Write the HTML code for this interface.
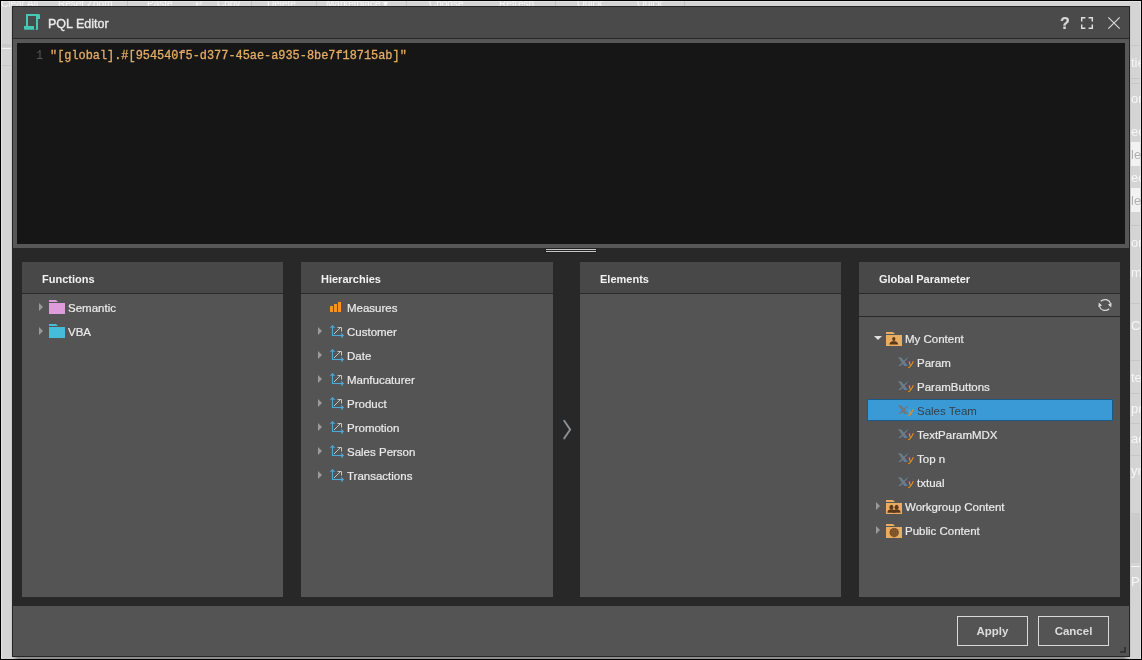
<!DOCTYPE html>
<html>
<head>
<meta charset="utf-8">
<style>
*{margin:0;padding:0;box-sizing:border-box;}
html,body{width:1142px;height:660px;overflow:hidden;}
body{position:relative;background:#000;font-family:"Liberation Sans",sans-serif;-webkit-font-smoothing:antialiased;}
svg{position:absolute;overflow:visible;}
#page{position:absolute;left:1px;top:1px;width:1140px;height:658px;background:#d4d4d4;overflow:hidden;}
#modal{position:absolute;left:12px;top:6px;width:1118px;height:651px;background:#282828;border:1px solid #262626;}
#hdr{position:absolute;left:13px;top:7px;width:1116px;height:31px;background:#4a4a4a;}
#edborder{position:absolute;left:13px;top:39px;width:1116px;height:209px;background:#575757;}
#editor{position:absolute;left:17px;top:43px;width:1108px;height:201px;background:#161616;}
.panel{position:absolute;top:262px;height:335px;background:#545454;}
.phead{position:absolute;left:0;top:0;right:0;height:32px;background:#484848;border-bottom:1px solid #2a2a2a;}
.ptitle{position:absolute;font-weight:bold;font-size:11px;line-height:14px;color:#f2f2f2;white-space:nowrap;}
.t{position:absolute;font-size:11.5px;line-height:16px;color:#ebebeb;white-space:nowrap;-webkit-text-stroke:0.2px currentColor;}
#footer{position:absolute;left:13px;top:606px;width:1116px;height:50px;background:#545454;}
.btn{position:absolute;top:616px;width:71px;height:30px;border:1px solid #dadada;color:#dcdcdc;font-weight:bold;font-size:11.5px;line-height:28px;text-align:center;}
.t,.ptitle,.btn,.mono{will-change:transform;}
.bgt{position:absolute;font-size:13px;line-height:16px;color:#f6f6f6;white-space:nowrap;will-change:transform;}
.mono{position:absolute;font-family:"Liberation Mono",monospace;font-size:11.9px;line-height:16px;white-space:pre;-webkit-text-stroke:0.3px currentColor;}
</style>
</head>
<body>
<div id="page"></div>
<div style="position:absolute;left:1px;top:1px;width:1px;height:658px;background:#e2e2e2;"></div>
<div style="position:absolute;left:11px;top:1px;width:1px;height:656px;background:#c8c8c8;"></div>
<div style="position:absolute;left:1130px;top:6px;width:1px;height:651px;background:#c8c8c8;"></div>
<div style="position:absolute;left:1140px;top:1px;width:1px;height:658px;background:#e2e2e2;"></div>
<div style="position:absolute;left:1px;top:1px;width:1140px;height:1px;background:#e2e2e2;"></div>
<div style="position:absolute;left:11px;top:32px;width:1px;height:8px;background:#b8c4d0;"></div>
<div style="position:absolute;left:2px;top:44px;width:9px;height:3px;background:#cacaca;"></div>
<div style="position:absolute;left:2px;top:48px;width:9px;height:1px;background:#f4f4f4;"></div>
<div style="position:absolute;left:2px;top:65px;width:9px;height:1px;background:#c8c8c8;"></div>
<div style="position:absolute;left:1131px;top:45px;width:9px;height:1px;background:#c6c6c6;"></div>
<div style="position:absolute;left:1131px;top:78px;width:9px;height:1px;background:#c6c6c6;"></div>
<div style="position:absolute;left:1131px;top:83px;width:9px;height:1px;background:#c6c6c6;"></div>
<div style="position:absolute;left:1131px;top:142px;width:9px;height:24px;background:#f2f2f2;"></div>
<div style="position:absolute;left:1131px;top:188px;width:9px;height:24px;background:#f2f2f2;"></div>
<div style="position:absolute;left:1131px;top:225px;width:9px;height:1px;background:#c6c6c6;"></div>
<div style="position:absolute;left:1131px;top:303px;width:9px;height:1px;background:#c6c6c6;"></div>
<div style="position:absolute;left:1131px;top:360px;width:9px;height:1px;background:#c6c6c6;"></div>
<div style="position:absolute;left:1131px;top:393px;width:9px;height:1px;background:#c6c6c6;"></div>
<div style="position:absolute;left:1131px;top:423px;width:9px;height:1px;background:#c6c6c6;"></div>
<div style="position:absolute;left:1131px;top:455px;width:9px;height:1px;background:#c6c6c6;"></div>
<div style="position:absolute;left:1131px;top:513px;width:9px;height:50px;background:#cbcbcb;"></div>
<div style="position:absolute;left:1131px;top:566px;width:9px;height:1px;background:#f4f4f4;"></div>
<div class="bgt" style="left:1131px;top:55px;">ties</div>
<div class="bgt" style="left:1131px;top:91px;">on</div>
<div class="bgt" style="left:1131px;top:124px;">ec</div>
<div class="bgt" style="left:1131px;top:147px;color:#b0b0b0;">le</div>
<div class="bgt" style="left:1131px;top:170px;">ec</div>
<div class="bgt" style="left:1131px;top:193px;color:#b0b0b0;">le</div>
<div class="bgt" style="left:1131px;top:235px;">orm</div>
<div class="bgt" style="left:1131px;top:265px;">ma</div>
<div class="bgt" style="left:1131px;top:318px;">C</div>
<div class="bgt" style="left:1131px;top:370px;">ted</div>
<div class="bgt" style="left:1131px;top:401px;">pre</div>
<div class="bgt" style="left:1131px;top:431px;">ach</div>
<div class="bgt" style="left:1131px;top:463px;">yn</div>
<div class="bgt" style="left:1131px;top:574px;">Pr</div>
<div style="position:absolute;left:127px;top:1px;width:1px;height:5px;background:#c2c2c2;"></div>
<div style="position:absolute;left:251px;top:1px;width:1px;height:5px;background:#c2c2c2;"></div>
<div style="position:absolute;left:316px;top:1px;width:1px;height:5px;background:#c2c2c2;"></div>
<div style="position:absolute;left:406px;top:1px;width:1px;height:5px;background:#c2c2c2;"></div>
<div style="position:absolute;left:555px;top:1px;width:1px;height:5px;background:#c2c2c2;"></div>
<div style="position:absolute;left:684px;top:1px;width:1px;height:5px;background:#c2c2c2;"></div>
<div class="bgt" style="left:1px;top:-4px;font-size:10px;">Clear All</div>
<div class="bgt" style="left:58px;top:-4px;font-size:10px;">Reset Zoom</div>
<div class="bgt" style="left:147px;top:-4px;font-size:10px;">Paste</div>
<div class="bgt" style="left:195px;top:-4px;font-size:10px;">&#8629;</div><div class="bgt" style="left:217px;top:-4px;font-size:10px;">Copy</div>
<div class="bgt" style="left:267px;top:-4px;font-size:10px;">Delete</div>
<div class="bgt" style="left:326px;top:-4px;font-size:10px;">Marketplace &#9662;</div>
<div class="bgt" style="left:429px;top:-4px;font-size:10px;">Choose</div>
<div class="bgt" style="left:499px;top:-4px;font-size:10px;">Refresh</div>
<div class="bgt" style="left:577px;top:-4px;font-size:10px;">Quick</div>
<div class="bgt" style="left:637px;top:-4px;font-size:10px;">Quick</div>

<div style="position:absolute;left:12px;top:657px;width:1118px;height:2px;background:linear-gradient(to right,#d4d4d4 0,#8e8e8e 6px,#8e8e8e 1111px,#d4d4d4 1118px);"></div>
<div id="modal"></div>
<div id="hdr"></div>
<svg style="left:0;top:0" width="1" height="1"><g fill="#45c8b6">
<path d="M26 14H38.8Q40 14 40 15.2V19H38V16H26Z"/><rect x="26" y="16" width="2" height="10"/><rect x="36" y="16" width="2" height="13.8"/><path d="M24 26H34V29.7H25Q24 29.7 24 28.7Z"/><rect x="34" y="29.2" width="2" height="0.5" opacity="0.6"/>
</g></svg>
<div class="t" style="left:48px;top:16px;font-size:12.5px;color:#ebebeb;-webkit-text-stroke:0.35px currentColor;">PQL Editor</div>
<div class="t" style="left:1060px;top:15px;font-size:16px;line-height:18px;font-weight:bold;color:#d9d9d9;">?</div>
<svg style="left:0;top:0" width="1" height="1"><g fill="none" stroke="#e0e0e0" stroke-width="1.45">
<path d="M1081.7 21.4V17.7H1085.4M1088.6 17.7H1092.3V21.4M1092.3 24.6V28.3H1088.6M1085.4 28.3H1081.7V24.6"/>
</g><g stroke="#dcdcdc" stroke-width="1.1"><path d="M1108.3 17.3L1119.7 28.7M1119.7 17.3L1108.3 28.7"/></g></svg>
<div id="edborder"></div>
<div id="editor"></div>
<div class="mono" style="left:36px;top:48px;color:#555;-webkit-text-stroke:0;">1</div>
<div class="mono" style="left:50px;top:48px;color:#e3ad64;">"[global].#[954540f5-d377-45ae-a935-8be7f18715ab]"</div>
<svg style="left:0;top:0" width="1" height="1"><rect x="545" y="248" width="52" height="5" fill="#222"/>
<rect x="546" y="249" width="50" height="1" fill="#c6c6c6"/><rect x="546" y="251" width="50" height="1" fill="#c6c6c6"/></svg>
<div class="panel" style="left:22px;width:261px;"><div class="phead"></div></div>
<div class="ptitle" style="left:42px;top:272px;">Functions</div>
<div class="panel" style="left:301px;width:252px;"><div class="phead"></div></div>
<div class="ptitle" style="left:321px;top:272px;">Hierarchies</div>
<div class="panel" style="left:580px;width:261px;"><div class="phead"></div></div>
<div class="ptitle" style="left:600px;top:272px;">Elements</div>
<div class="panel" style="left:859px;width:261px;"><div class="phead"></div></div>
<div class="ptitle" style="left:879px;top:272px;">Global Parameter</div>
<svg style="left:0;top:0" width="1" height="1"><path d="M564.2 420.8L570.2 429.6L564.2 438.4" fill="none" stroke="#8a8f93" stroke-width="1.9" stroke-linecap="round"/></svg>
<svg style="left:0;top:0" width="1" height="1"><path d="M39 303L43 307L39 311Z" fill="#9a9a9a"/></svg>
<svg style="left:0;top:0" width="1" height="1"><path d="M49 300H56L58 302H49Z" fill="#de9cdb"/>
<rect x="49" y="303" width="16" height="11" fill="#de9cdb"/></svg>
<div class="t" style="left:68px;top:300px;">Semantic</div>
<svg style="left:0;top:0" width="1" height="1"><path d="M39 327L43 331L39 335Z" fill="#9a9a9a"/></svg>
<svg style="left:0;top:0" width="1" height="1"><path d="M49 324H56L58 326H49Z" fill="#45bcd8"/>
<rect x="49" y="327" width="16" height="11" fill="#45bcd8"/></svg>
<div class="t" style="left:68px;top:324px;">VBA</div>
<svg style="left:0;top:0" width="1" height="1"><g fill="#f7941d"><rect x="330" y="306" width="3" height="6"/><rect x="334" y="304" width="3" height="8"/><rect x="338" y="302" width="3" height="10"/></g></svg>
<div class="t" style="left:347px;top:300px;">Measures</div>
<svg style="left:0;top:0" width="1" height="1"><path d="M318 327L322 331L318 335Z" fill="#9a9a9a"/></svg>
<svg style="left:0;top:0" width="1" height="1"><g fill="none" stroke="#4ea8d8" stroke-width="1.1">
<path d="M332.5 325.8V335.5H343.2"/><path d="M330.5 327.8L332.5 325.8L334.5 327.8"/><path d="M341.2 333.5L343.2 335.5L341.2 337.5"/></g>
<g fill="none" stroke="#d2d2d2" stroke-width="0.9"><path d="M334 334L341 327"/><path d="M337.5 327.5H341.5V331.5"/></g></svg>
<div class="t" style="left:347px;top:324px;">Customer</div>
<svg style="left:0;top:0" width="1" height="1"><path d="M318 351L322 355L318 359Z" fill="#9a9a9a"/></svg>
<svg style="left:0;top:0" width="1" height="1"><g fill="none" stroke="#4ea8d8" stroke-width="1.1">
<path d="M332.5 349.8V359.5H343.2"/><path d="M330.5 351.8L332.5 349.8L334.5 351.8"/><path d="M341.2 357.5L343.2 359.5L341.2 361.5"/></g>
<g fill="none" stroke="#d2d2d2" stroke-width="0.9"><path d="M334 358L341 351"/><path d="M337.5 351.5H341.5V355.5"/></g></svg>
<div class="t" style="left:347px;top:348px;">Date</div>
<svg style="left:0;top:0" width="1" height="1"><path d="M318 375L322 379L318 383Z" fill="#9a9a9a"/></svg>
<svg style="left:0;top:0" width="1" height="1"><g fill="none" stroke="#4ea8d8" stroke-width="1.1">
<path d="M332.5 373.8V383.5H343.2"/><path d="M330.5 375.8L332.5 373.8L334.5 375.8"/><path d="M341.2 381.5L343.2 383.5L341.2 385.5"/></g>
<g fill="none" stroke="#d2d2d2" stroke-width="0.9"><path d="M334 382L341 375"/><path d="M337.5 375.5H341.5V379.5"/></g></svg>
<div class="t" style="left:347px;top:372px;">Manfucaturer</div>
<svg style="left:0;top:0" width="1" height="1"><path d="M318 399L322 403L318 407Z" fill="#9a9a9a"/></svg>
<svg style="left:0;top:0" width="1" height="1"><g fill="none" stroke="#4ea8d8" stroke-width="1.1">
<path d="M332.5 397.8V407.5H343.2"/><path d="M330.5 399.8L332.5 397.8L334.5 399.8"/><path d="M341.2 405.5L343.2 407.5L341.2 409.5"/></g>
<g fill="none" stroke="#d2d2d2" stroke-width="0.9"><path d="M334 406L341 399"/><path d="M337.5 399.5H341.5V403.5"/></g></svg>
<div class="t" style="left:347px;top:396px;">Product</div>
<svg style="left:0;top:0" width="1" height="1"><path d="M318 423L322 427L318 431Z" fill="#9a9a9a"/></svg>
<svg style="left:0;top:0" width="1" height="1"><g fill="none" stroke="#4ea8d8" stroke-width="1.1">
<path d="M332.5 421.8V431.5H343.2"/><path d="M330.5 423.8L332.5 421.8L334.5 423.8"/><path d="M341.2 429.5L343.2 431.5L341.2 433.5"/></g>
<g fill="none" stroke="#d2d2d2" stroke-width="0.9"><path d="M334 430L341 423"/><path d="M337.5 423.5H341.5V427.5"/></g></svg>
<div class="t" style="left:347px;top:420px;">Promotion</div>
<svg style="left:0;top:0" width="1" height="1"><path d="M318 447L322 451L318 455Z" fill="#9a9a9a"/></svg>
<svg style="left:0;top:0" width="1" height="1"><g fill="none" stroke="#4ea8d8" stroke-width="1.1">
<path d="M332.5 445.8V455.5H343.2"/><path d="M330.5 447.8L332.5 445.8L334.5 447.8"/><path d="M341.2 453.5L343.2 455.5L341.2 457.5"/></g>
<g fill="none" stroke="#d2d2d2" stroke-width="0.9"><path d="M334 454L341 447"/><path d="M337.5 447.5H341.5V451.5"/></g></svg>
<div class="t" style="left:347px;top:444px;">Sales Person</div>
<svg style="left:0;top:0" width="1" height="1"><path d="M318 471L322 475L318 479Z" fill="#9a9a9a"/></svg>
<svg style="left:0;top:0" width="1" height="1"><g fill="none" stroke="#4ea8d8" stroke-width="1.1">
<path d="M332.5 469.8V479.5H343.2"/><path d="M330.5 471.8L332.5 469.8L334.5 471.8"/><path d="M341.2 477.5L343.2 479.5L341.2 481.5"/></g>
<g fill="none" stroke="#d2d2d2" stroke-width="0.9"><path d="M334 478L341 471"/><path d="M337.5 471.5H341.5V475.5"/></g></svg>
<div class="t" style="left:347px;top:468px;">Transactions</div>
<div style="position:absolute;left:859px;top:316px;width:261px;height:1px;background:#2a2a2a;"></div>
<svg style="left:0;top:0" width="1" height="1"><g fill="none" stroke="#dcdcdc" stroke-width="1.25">
<path d="M1100.8 301.2A6 6 0 0 1 1110.6 303.6"/><path d="M1109.2 308.8A6 6 0 0 1 1099.4 306.4"/></g>
<g fill="#dcdcdc"><path d="M1108 304.5L1111.6 303L1111.2 307.5Z"/><path d="M1102 305.5L1098.4 307L1098.8 302.5Z"/></g></svg>
<svg style="left:0;top:0" width="1" height="1"><path d="M874 336H882L878 340Z" fill="#e0e0e0"/></svg>
<svg style="left:0;top:0" width="1" height="1"><path d="M886 332H893L895 334H886Z" fill="#e9ad62"/>
<rect x="886" y="335" width="16" height="11" fill="#e9ad62"/><ellipse cx="893.8" cy="339" rx="1.6" ry="2" fill="#5a391b"/><path d="M889.3 344.6C889.6 342.4 891 341.6 892.6 341.3H895C896.6 341.6 898 342.4 898.3 344.6Z" fill="#5a391b"/></svg>
<div class="t" style="left:905px;top:331px;">My Content</div>
<div style="position:absolute;left:867px;top:399px;width:246px;height:22px;background:#3a9ad6;border:1px solid #1b5a86;"></div>
<svg style="left:0;top:0" width="1" height="1">
<path d="M897.8 357.6C899.5 356.8 901 357.2 902 358.2L907.8 366H904.2L900 359.8C899.6 358.8 898.8 358.2 897.8 357.6Z" fill="#6b7e8c"/>
<path d="M908.6 357.4C907.6 357.6 907 358 906.2 358.6L898.2 366H900.6L906.8 359.4C907.2 358.6 907.9 357.9 908.6 357.4Z" fill="#6b7e8c"/>
<g fill="none" stroke="#f08c1c" stroke-linecap="round"><path d="M909.3 361.8L910.3 365.6" stroke-width="1.15"/><path d="M913.1 361.6C911.9 364.5 910.5 367.3 908.6 367.6" stroke-width="1.15"/></g></svg>
<div class="t" style="left:917px;top:355px;color:#ebebeb;">Param</div>
<svg style="left:0;top:0" width="1" height="1">
<path d="M897.8 381.6C899.5 380.8 901 381.2 902 382.2L907.8 390H904.2L900 383.8C899.6 382.8 898.8 382.2 897.8 381.6Z" fill="#6b7e8c"/>
<path d="M908.6 381.4C907.6 381.6 907 382 906.2 382.6L898.2 390H900.6L906.8 383.4C907.2 382.6 907.9 381.9 908.6 381.4Z" fill="#6b7e8c"/>
<g fill="none" stroke="#f08c1c" stroke-linecap="round"><path d="M909.3 385.8L910.3 389.6" stroke-width="1.15"/><path d="M913.1 385.6C911.9 388.5 910.5 391.3 908.6 391.6" stroke-width="1.15"/></g></svg>
<div class="t" style="left:917px;top:379px;color:#ebebeb;">ParamButtons</div>
<svg style="left:0;top:0" width="1" height="1">
<path d="M897.8 405.6C899.5 404.8 901 405.2 902 406.2L907.8 414H904.2L900 407.8C899.6 406.8 898.8 406.2 897.8 405.6Z" fill="#6f767c"/>
<path d="M908.6 405.4C907.6 405.6 907 406 906.2 406.6L898.2 414H900.6L906.8 407.4C907.2 406.6 907.9 405.9 908.6 405.4Z" fill="#6f767c"/>
<g fill="none" stroke="#f08c1c" stroke-linecap="round"><path d="M909.3 409.8L910.3 413.6" stroke-width="1.15"/><path d="M913.1 409.6C911.9 412.5 910.5 415.3 908.6 415.6" stroke-width="1.15"/></g></svg>
<div class="t" style="left:917px;top:403px;color:#34404a;-webkit-text-stroke:0;">Sales Team</div>
<svg style="left:0;top:0" width="1" height="1">
<path d="M897.8 429.6C899.5 428.8 901 429.2 902 430.2L907.8 438H904.2L900 431.8C899.6 430.8 898.8 430.2 897.8 429.6Z" fill="#6b7e8c"/>
<path d="M908.6 429.4C907.6 429.6 907 430 906.2 430.6L898.2 438H900.6L906.8 431.4C907.2 430.6 907.9 429.9 908.6 429.4Z" fill="#6b7e8c"/>
<g fill="none" stroke="#f08c1c" stroke-linecap="round"><path d="M909.3 433.8L910.3 437.6" stroke-width="1.15"/><path d="M913.1 433.6C911.9 436.5 910.5 439.3 908.6 439.6" stroke-width="1.15"/></g></svg>
<div class="t" style="left:917px;top:427px;color:#ebebeb;">TextParamMDX</div>
<svg style="left:0;top:0" width="1" height="1">
<path d="M897.8 453.6C899.5 452.8 901 453.2 902 454.2L907.8 462H904.2L900 455.8C899.6 454.8 898.8 454.2 897.8 453.6Z" fill="#6b7e8c"/>
<path d="M908.6 453.4C907.6 453.6 907 454 906.2 454.6L898.2 462H900.6L906.8 455.4C907.2 454.6 907.9 453.9 908.6 453.4Z" fill="#6b7e8c"/>
<g fill="none" stroke="#f08c1c" stroke-linecap="round"><path d="M909.3 457.8L910.3 461.6" stroke-width="1.15"/><path d="M913.1 457.6C911.9 460.5 910.5 463.3 908.6 463.6" stroke-width="1.15"/></g></svg>
<div class="t" style="left:917px;top:451px;color:#ebebeb;">Top n</div>
<svg style="left:0;top:0" width="1" height="1">
<path d="M897.8 477.6C899.5 476.8 901 477.2 902 478.2L907.8 486H904.2L900 479.8C899.6 478.8 898.8 478.2 897.8 477.6Z" fill="#6b7e8c"/>
<path d="M908.6 477.4C907.6 477.6 907 478 906.2 478.6L898.2 486H900.6L906.8 479.4C907.2 478.6 907.9 477.9 908.6 477.4Z" fill="#6b7e8c"/>
<g fill="none" stroke="#f08c1c" stroke-linecap="round"><path d="M909.3 481.8L910.3 485.6" stroke-width="1.15"/><path d="M913.1 481.6C911.9 484.5 910.5 487.3 908.6 487.6" stroke-width="1.15"/></g></svg>
<div class="t" style="left:917px;top:475px;color:#ebebeb;">txtual</div>
<svg style="left:0;top:0" width="1" height="1"><path d="M876 502L880 506L876 510Z" fill="#9a9a9a"/></svg>
<svg style="left:0;top:0" width="1" height="1"><path d="M886 500H893L895 502H886Z" fill="#e9ad62"/>
<rect x="886" y="503" width="16" height="11" fill="#e9ad62"/><ellipse cx="896.6" cy="507.3" rx="2" ry="2.5" fill="#5a391b"/><path d="M892.6 512.8C892.6 510.40000000000003 894.0 509.8 895.4 509.6H897.8000000000001C899.2 509.8 900.6 510.40000000000003 900.6 512.8Z" fill="#5a391b"/><path d="M887.6 513.2C887.6 510.8 889 510.2 890.2 510H892.6C893.8 510.2 895.4 510.8 895.4 513.2Z" fill="#e9ad62" opacity="0"/><ellipse cx="891.4" cy="507.3" rx="2" ry="2.5" fill="#5a391b"/><path d="M887.4 512.8C887.4 510.40000000000003 888.8 509.8 890.1999999999999 509.6H892.6C894.0 509.8 895.4 510.40000000000003 895.4 512.8Z" fill="#5a391b"/></svg>
<div class="t" style="left:905px;top:499px;">Workgroup Content</div>
<svg style="left:0;top:0" width="1" height="1"><path d="M876 526L880 530L876 534Z" fill="#9a9a9a"/></svg>
<svg style="left:0;top:0" width="1" height="1"><path d="M886 524H893L895 526H886Z" fill="#e9ad62"/>
<rect x="886" y="527" width="16" height="11" fill="#e9ad62"/><circle cx="894.2" cy="532.6" r="4.6" fill="#6a4420"/><g stroke="#9a6a34" stroke-width="0.6" fill="none"><path d="M889.8 532.6H898.6M894.2 528.2V537"/><ellipse cx="894.2" cy="532.6" rx="2.2" ry="4.4"/><path d="M890.6 530.3H897.8M890.6 534.9H897.8"/></g></svg>
<div class="t" style="left:905px;top:523px;">Public Content</div>
<div id="footer"></div>
<div class="btn" style="left:957px;">Apply</div>
<div class="btn" style="left:1038px;">Cancel</div>
<svg style="left:0;top:0" width="1" height="1"><path d="M1124 647H1126V653H1120V651H1124Z" fill="#353535"/></svg>
<div style="position:absolute;left:0;top:0;width:1142px;height:660px;border:1px solid #000;"></div>
</body>
</html>
